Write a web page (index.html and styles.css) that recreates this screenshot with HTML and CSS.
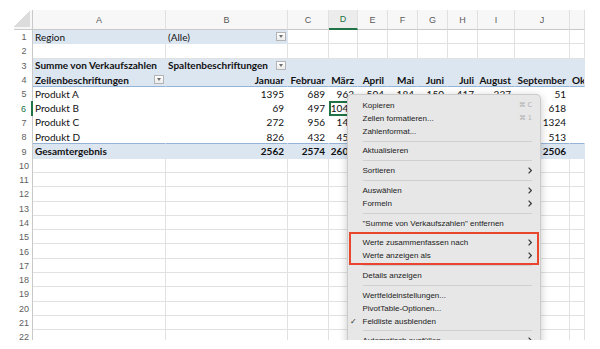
FILE: index.html
```html
<!DOCTYPE html>
<html lang="de">
<head>
<meta charset="utf-8">
<title>Pivot</title>
<link rel="stylesheet" href="styles.css">
</head>
<body>
<div class="sheet">
  <div class="grid">
    <div class="corner"></div>
    <div class="ch">A</div><div class="ch">B</div><div class="ch">C</div><div class="ch sel-col">D</div><div class="ch">E</div><div class="ch">F</div><div class="ch">G</div><div class="ch">H</div><div class="ch">I</div><div class="ch">J</div><div class="ch"></div>

    <div class="rh">1</div><div class="c pv">Region</div><div class="c pv">(Alle)<span class="dd"></span></div><div class="c"></div><div class="c"></div><div class="c"></div><div class="c"></div><div class="c"></div><div class="c"></div><div class="c"></div><div class="c"></div><div class="c"></div>

    <div class="rh">2</div><div class="c"></div><div class="c"></div><div class="c"></div><div class="c"></div><div class="c"></div><div class="c"></div><div class="c"></div><div class="c"></div><div class="c"></div><div class="c"></div><div class="c"></div>

    <div class="rh">3</div><div class="c pv b">Summe von Verkaufszahlen</div><div class="c pv b">Spaltenbeschriftungen<span class="dd"></span></div><div class="c pv"></div><div class="c pv"></div><div class="c pv"></div><div class="c pv"></div><div class="c pv"></div><div class="c pv"></div><div class="c pv"></div><div class="c pv"></div><div class="c pv"></div>

    <div class="rh">4</div><div class="c pv b hl">Zeilenbeschriftungen<span class="dd"></span></div><div class="c pv b hl r">Januar</div><div class="c pv b hl r">Februar</div><div class="c pv b hl r">März</div><div class="c pv b hl r">April</div><div class="c pv b hl r">Mai</div><div class="c pv b hl r">Juni</div><div class="c pv b hl r">Juli</div><div class="c pv b hl r">August</div><div class="c pv b hl r">September</div><div class="c pv b hl">Ok</div>

    <div class="rh">5</div><div class="c pw">Produkt A</div><div class="c pw r">1395</div><div class="c pw r">689</div><div class="c pw r">963</div><div class="c pw r">504</div><div class="c pw r">184</div><div class="c pw r">150</div><div class="c pw r">417</div><div class="c pw r">337</div><div class="c pw r">51</div><div class="c pw"></div>

    <div class="rh sel-row">6</div><div class="c pw">Produkt B</div><div class="c pw r">69</div><div class="c pw r">497</div><div class="c pw r cur">1042</div><div class="c pw"></div><div class="c pw"></div><div class="c pw"></div><div class="c pw"></div><div class="c pw"></div><div class="c pw r">618</div><div class="c pw"></div>

    <div class="rh">7</div><div class="c pw">Produkt C</div><div class="c pw r">272</div><div class="c pw r">956</div><div class="c pw r">142</div><div class="c pw"></div><div class="c pw"></div><div class="c pw"></div><div class="c pw"></div><div class="c pw"></div><div class="c pw r">1324</div><div class="c pw"></div>

    <div class="rh">8</div><div class="c pw tl">Produkt D</div><div class="c pw tl r">826</div><div class="c pw tl r">432</div><div class="c pw tl r">457</div><div class="c pw tl"></div><div class="c pw tl"></div><div class="c pw tl"></div><div class="c pw tl"></div><div class="c pw tl"></div><div class="c pw tl r">513</div><div class="c pw tl"></div>

    <div class="rh">9</div><div class="c pv b">Gesamtergebnis</div><div class="c pv b r">2562</div><div class="c pv b r">2574</div><div class="c pv b r">2604</div><div class="c pv"></div><div class="c pv"></div><div class="c pv"></div><div class="c pv"></div><div class="c pv"></div><div class="c pv b r">2506</div><div class="c pv"></div>

    <div class="rh">10</div><div class="c"></div><div class="c"></div><div class="c"></div><div class="c"></div><div class="c"></div><div class="c"></div><div class="c"></div><div class="c"></div><div class="c"></div><div class="c"></div><div class="c"></div>
    <div class="rh">11</div><div class="c"></div><div class="c"></div><div class="c"></div><div class="c"></div><div class="c"></div><div class="c"></div><div class="c"></div><div class="c"></div><div class="c"></div><div class="c"></div><div class="c"></div>
    <div class="rh">12</div><div class="c"></div><div class="c"></div><div class="c"></div><div class="c"></div><div class="c"></div><div class="c"></div><div class="c"></div><div class="c"></div><div class="c"></div><div class="c"></div><div class="c"></div>
    <div class="rh">13</div><div class="c"></div><div class="c"></div><div class="c"></div><div class="c"></div><div class="c"></div><div class="c"></div><div class="c"></div><div class="c"></div><div class="c"></div><div class="c"></div><div class="c"></div>
    <div class="rh">14</div><div class="c"></div><div class="c"></div><div class="c"></div><div class="c"></div><div class="c"></div><div class="c"></div><div class="c"></div><div class="c"></div><div class="c"></div><div class="c"></div><div class="c"></div>
    <div class="rh">15</div><div class="c"></div><div class="c"></div><div class="c"></div><div class="c"></div><div class="c"></div><div class="c"></div><div class="c"></div><div class="c"></div><div class="c"></div><div class="c"></div><div class="c"></div>
    <div class="rh">16</div><div class="c"></div><div class="c"></div><div class="c"></div><div class="c"></div><div class="c"></div><div class="c"></div><div class="c"></div><div class="c"></div><div class="c"></div><div class="c"></div><div class="c"></div>
    <div class="rh">17</div><div class="c"></div><div class="c"></div><div class="c"></div><div class="c"></div><div class="c"></div><div class="c"></div><div class="c"></div><div class="c"></div><div class="c"></div><div class="c"></div><div class="c"></div>
    <div class="rh">18</div><div class="c"></div><div class="c"></div><div class="c"></div><div class="c"></div><div class="c"></div><div class="c"></div><div class="c"></div><div class="c"></div><div class="c"></div><div class="c"></div><div class="c"></div>
    <div class="rh">19</div><div class="c"></div><div class="c"></div><div class="c"></div><div class="c"></div><div class="c"></div><div class="c"></div><div class="c"></div><div class="c"></div><div class="c"></div><div class="c"></div><div class="c"></div>
    <div class="rh">20</div><div class="c"></div><div class="c"></div><div class="c"></div><div class="c"></div><div class="c"></div><div class="c"></div><div class="c"></div><div class="c"></div><div class="c"></div><div class="c"></div><div class="c"></div>
    <div class="rh">21</div><div class="c"></div><div class="c"></div><div class="c"></div><div class="c"></div><div class="c"></div><div class="c"></div><div class="c"></div><div class="c"></div><div class="c"></div><div class="c"></div><div class="c"></div>
    <div class="rh">22</div><div class="c"></div><div class="c"></div><div class="c"></div><div class="c"></div><div class="c"></div><div class="c"></div><div class="c"></div><div class="c"></div><div class="c"></div><div class="c"></div><div class="c"></div>
  </div>

  <div class="menu">
    <div class="mi"><span>Kopieren</span><span class="sc">⌘ C</span></div>
    <div class="mi"><span>Zellen formatieren...</span><span class="sc">⌘ 1</span></div>
    <div class="mi"><span>Zahlenformat...</span></div>
    <div class="sep"></div>
    <div class="mi"><span>Aktualisieren</span></div>
    <div class="sep"></div>
    <div class="mi"><span>Sortieren</span><svg class="chev" viewBox="0 0 4 7" width="4" height="7"><path d="M0.6 0.6 L3.3 3.5 L0.6 6.4" /></svg></div>
    <div class="sep"></div>
    <div class="mi"><span>Auswählen</span><svg class="chev" viewBox="0 0 4 7" width="4" height="7"><path d="M0.6 0.6 L3.3 3.5 L0.6 6.4" /></svg></div>
    <div class="mi"><span>Formeln</span><svg class="chev" viewBox="0 0 4 7" width="4" height="7"><path d="M0.6 0.6 L3.3 3.5 L0.6 6.4" /></svg></div>
    <div class="sep"></div>
    <div class="mi"><span>"Summe von Verkaufszahlen" entfernen</span></div>
    <div class="sep"></div>
    <div class="mi"><span>Werte zusammenfassen nach</span><svg class="chev" viewBox="0 0 4 7" width="4" height="7"><path d="M0.6 0.6 L3.3 3.5 L0.6 6.4" /></svg></div>
    <div class="mi"><span>Werte anzeigen als</span><svg class="chev" viewBox="0 0 4 7" width="4" height="7"><path d="M0.6 0.6 L3.3 3.5 L0.6 6.4" /></svg></div>
    <div class="sep"></div>
    <div class="mi"><span>Details anzeigen</span></div>
    <div class="sep"></div>
    <div class="mi"><span>Wertfeldeinstellungen...</span></div>
    <div class="mi"><span>PivotTable-Optionen...</span></div>
    <div class="mi checked"><span>Feldliste ausblenden</span></div>
    <div class="sep"></div>
    <div class="mi"><span>Automatisch ausfüllen</span><svg class="chev" viewBox="0 0 4 7" width="4" height="7"><path d="M0.6 0.6 L3.3 3.5 L0.6 6.4" /></svg></div>
  </div>

  <div class="highlight"></div>
</div>
</body>
</html>
```

FILE: styles.css
```css
html, body {
  margin: 0;
  padding: 0;
  background: #ffffff;
}

.sheet {
  position: relative;
  margin: 10px 0 0 14px;
  width: 571px;
  height: 330px;
  overflow: hidden;
  font-family: Lato, "Liberation Sans", sans-serif;
  font-size: 10px;
  color: #111111;
}

.grid {
  display: grid;
  grid-template-columns: 19px 133px 122px 41px 29px 30px 30px 30px 30px 37px 55px 15px;
  grid-template-rows: 20px repeat(22, 14.3px);
  width: 571px;
}

.grid > div {
  box-sizing: border-box;
  display: flex;
  align-items: center;
  white-space: nowrap;
  overflow: hidden;
}

.corner {
  background: linear-gradient(to bottom right, #ffffff 0, #ffffff 50%, #dcdcdc 50%, #dcdcdc 100%);
  background-size: 16px 17px;
  background-repeat: no-repeat;
  background-position: right 2px bottom 2px;
  background-color: #f7f7f7;
  border-right: 1px solid #c9c9c9;
  border-bottom: 1px solid #c9c9c9;
}

.ch {
  justify-content: center;
  background: #f7f7f7;
  border-right: 1px solid #e0e0e0;
  border-bottom: 1px solid #c9c9c9;
  color: #5a5a5a;
  font-family: "Liberation Sans", sans-serif;
  font-size: 9px;
}

.ch.sel-col {
  color: #217346;
  background: #ececec;
  border-bottom: 2px solid #217346;
}

.rh {
  justify-content: center;
  background: #ffffff;
  border-right: 1px solid #c9c9c9;
  color: #5e5e5e;
  font-family: "Liberation Sans", sans-serif;
  font-size: 9px;
  padding-left: 2px;
}

.rh.sel-row {
  color: #217346;
  border-right: 2px solid #217346;
}

.c {
  border-right: 1px solid #e1e1e1;
  border-bottom: 1px solid #e1e1e1;
  padding: 0 3px 0 2px;
}

.c.pv {
  background: #dce6f1;
  border-right-color: #dce6f1;
  border-bottom-color: #dce6f1;
}

.c.pw {
  background: #ffffff;
  border-right-color: #ffffff;
  border-bottom-color: #ffffff;
}

.c.hl {
  border-bottom-color: #95b3d7;
}

.c.tl {
  border-bottom-color: #95b3d7;
}

.b {
  font-weight: 700;
}

.r {
  justify-content: flex-end;
}

.c.cur {
  outline: 2px solid #217346;
  outline-offset: -2px;
}

.dd {
  margin-left: auto;
  margin-right: -2px;
  width: 10px;
  height: 9px;
  box-sizing: border-box;
  border: 1px solid #b4b4b4;
  background: linear-gradient(#ffffff, #ececec);
  display: flex;
  align-items: center;
  justify-content: center;
}

.dd::after {
  content: "";
  width: 0;
  height: 0;
  border-left: 2.5px solid transparent;
  border-right: 2.5px solid transparent;
  border-top: 3px solid #707070;
}

.menu {
  position: absolute;
  left: 333px;
  top: 84px;
  width: 194px;
  height: 260px;
  box-sizing: border-box;
  padding-top: 3.8px;
  background: #e7e7e7;
  border: 0.5px solid rgba(0, 0, 0, 0.12);
  border-radius: 5px;
  box-shadow: 0 2px 8px rgba(0, 0, 0, 0.22);
  font-family: "Liberation Sans", "DejaVu Sans", sans-serif;
  font-size: 8px;
  color: #222222;
}

.mi {
  position: relative;
  height: 13px;
  display: flex;
  align-items: center;
  justify-content: space-between;
  padding: 0 8px 0 14.5px;
  white-space: nowrap;
}

.mi.checked::before {
  content: "✓";
  position: absolute;
  left: 2px;
  top: 0;
  line-height: 13px;
  font-family: "DejaVu Sans", sans-serif;
  font-size: 8px;
  color: #303030;
}

.sc {
  color: #b0b0b0;
  font-family: "DejaVu Sans", sans-serif;
  font-size: 6.5px;
}

.chev {
  fill: none;
  stroke: #3a3a3a;
  stroke-width: 1.2;
}

.sep {
  height: 1px;
  margin: 2.85px 8px 2.85px 14.5px;
  background: #d0d0d0;
}

.highlight {
  position: absolute;
  left: 335px;
  top: 221.7px;
  width: 190px;
  height: 33.3px;
  box-sizing: border-box;
  border: 2px solid #e8472d;
}
```
